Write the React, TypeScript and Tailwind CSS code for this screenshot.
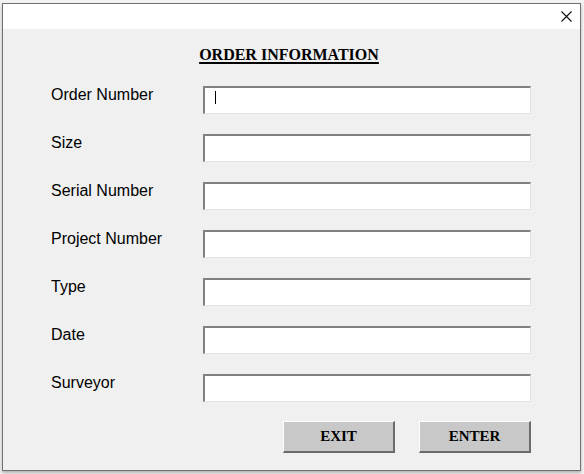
import React from "react";

const fields = ["Order Number", "Size", "Serial Number", "Project Number", "Type", "Date", "Surveyor"];

function CloseIcon() {
  return (
    <svg width="11" height="11" viewBox="0 0 11 11" className="block">
      <path d="M0.5 0.5 L10.5 10.5 M10.5 0.5 L0.5 10.5" stroke="#111" strokeWidth="1.1" fill="none" />
    </svg>
  );
}

function Field({ label, focused }: { label: string; focused?: boolean }) {
  return (
    <div className="flex items-start">
      <div className="w-[152px] text-[16px] leading-[18px] text-black">{label}</div>
      <div className="relative h-[28px] w-[328px] border-t-2 border-l-2 border-r border-b border-t-[#808080] border-l-[#808080] border-r-[#e3e3e3] border-b-[#e3e3e3] bg-white">
        {focused && <div className="absolute left-[10px] top-[3px] h-[13px] w-[1px] bg-black" />}
      </div>
    </div>
  );
}

export default function App() {
  return (
    <div className="h-[474px] w-[584px] overflow-hidden bg-[#f3f3f3] pt-[3px] pl-[2px] font-['Liberation_Sans',Arial,sans-serif]">
      <div className="flex h-[468px] w-[579px] flex-col border border-[#717171] bg-[#f0f0f0] shadow-[0_2px_3px_rgba(0,0,0,0.28)]">
        <div className="flex h-[25px] shrink-0 items-start justify-end bg-white pr-[8px] pt-[7px]">
          <CloseIcon />
        </div>
        <div className="flex flex-col pl-[48px] pt-[14px]">
          <div className="w-[476px] text-center">
            <span className="font-['Liberation_Serif','Times_New_Roman',serif] text-[16px] leading-[18px] font-bold text-black underline decoration-2 underline-offset-[2px]">
              ORDER INFORMATION
            </span>
          </div>
          <div className="mt-[19px] flex flex-col gap-[20px]">
            {fields.map((f, i) => (
              <Field key={f} label={f} focused={i === 0} />
            ))}
          </div>
          <div className="mt-[19px] flex w-[480px] justify-end gap-[24px]">
            <button className="flex h-[32px] w-[112px] items-center justify-center border-t border-l border-r-2 border-b-2 border-t-white border-l-white border-r-[#6b6b6b] border-b-[#6b6b6b] bg-[#c8c8c8] font-['Liberation_Serif','Times_New_Roman',serif] text-[15px] font-bold text-black">
              EXIT
            </button>
            <button className="flex h-[32px] w-[112px] items-center justify-center border-t border-l border-r-2 border-b-2 border-t-white border-l-white border-r-[#6b6b6b] border-b-[#6b6b6b] bg-[#c8c8c8] font-['Liberation_Serif','Times_New_Roman',serif] text-[15px] font-bold text-black">
              ENTER
            </button>
          </div>
        </div>
      </div>
    </div>
  );
}
